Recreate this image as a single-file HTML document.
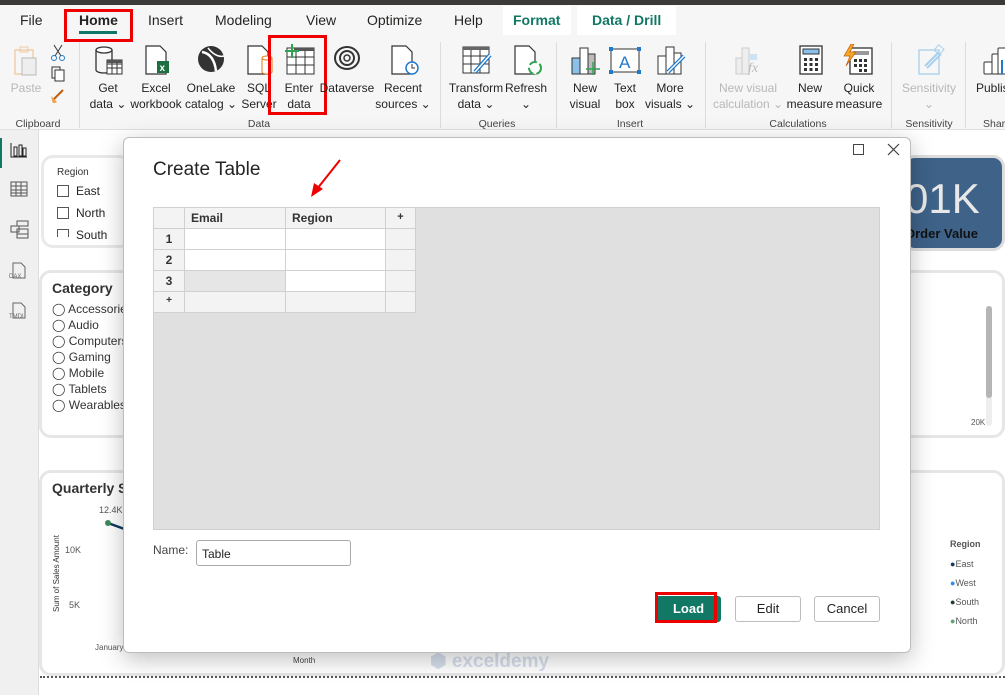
<!DOCTYPE html>
<html><head><meta charset="utf-8">
<style>
*{margin:0;padding:0;box-sizing:border-box}
body{width:1005px;height:695px;overflow:hidden;position:relative;background:#fff;font-family:"Liberation Sans",sans-serif;color:#252423}
.a{position:absolute}
.tab{position:absolute;top:12px;font-size:14px;color:#252423}
.btn{position:absolute;top:80px;width:80px;margin-left:-40px;text-align:center;font-size:12px;line-height:16px;color:#252423;white-space:nowrap}
.dis{color:#b8b8b8}
.ic{position:absolute;top:44px}
.sep{position:absolute;top:42px;width:1px;height:86px;background:#dcdcdc}
.gl{position:absolute;top:118px;font-size:10.5px;color:#444;width:100px;margin-left:-50px;text-align:center}
.card{position:absolute;background:#fff;border:3px solid #e6e6e6;border-radius:12px}
.cell{position:absolute;border-right:1px solid #d0d0d0;border-bottom:1px solid #d0d0d0;font-size:12px;font-weight:bold;color:#333}
.pbtn{position:absolute;top:596px;height:26px;border:1px solid #bdbdbd;border-radius:3px;background:#fff;font-size:13px;text-align:center;line-height:24px;color:#252423}
</style></head><body>
<div class="a" style="left:0;top:0;width:1005px;height:5px;background:#3b3a39"></div>
<div class="a" style="left:0;top:5px;width:1005px;height:125px;background:#f6f6f6"></div>
<div class="a" style="left:503px;top:6px;width:68px;height:29px;background:#fff"></div>
<div class="a" style="left:577px;top:6px;width:99px;height:29px;background:#fff"></div>
<div class="tab" style="left:20px">File</div>
<div class="tab" style="left:79px;font-weight:bold">Home</div>
<div class="a" style="left:79px;top:31px;width:38px;height:3px;background:#117865"></div>
<div class="a" style="left:64px;top:9px;width:69px;height:33px;border:3px solid #e00"></div>
<div class="tab" style="left:148px">Insert</div>
<div class="tab" style="left:215px">Modeling</div>
<div class="tab" style="left:306px">View</div>
<div class="tab" style="left:367px">Optimize</div>
<div class="tab" style="left:454px">Help</div>
<div class="tab" style="left:513px;color:#117865;font-weight:bold">Format</div>
<div class="tab" style="left:592px;color:#117865;font-weight:bold">Data / Drill</div>

<svg class="ic" style="left:12px" width="32" height="32"><rect x="3" y="6" width="18" height="24" fill="none" stroke="#f0c8a0" stroke-width="1.3"/><rect x="10" y="14" width="14" height="17" fill="#eee" stroke="#bbb"/><rect x="8" y="3" width="8" height="5" fill="none" stroke="#f0c8a0"/></svg>
<svg class="ic" style="left:50px;top:43px" width="16" height="60"><path d="M4 2 L11 13 M12 2 L5 13" stroke="#333" fill="none"/><circle cx="4" cy="15" r="2.5" stroke="#1f7acb" fill="none"/><circle cx="12" cy="15" r="2.5" stroke="#1f7acb" fill="none"/><rect x="2" y="24" width="8" height="11" fill="none" stroke="#333"/><rect x="5" y="27" width="9" height="11" fill="#fff" stroke="#333"/><path d="M3 57 L13 47" stroke="#c35b15" stroke-width="2"/><path d="M1 53 L7 59 L3 61 Z" fill="#f2a04a"/></svg>
<div class="btn dis" style="left:26px">Paste</div>
<div class="sep" style="left:79px"></div>

<svg class="ic" style="left:93px" width="32" height="34"><path d="M3 6 v20 a8 3 0 0 0 16 0 v-20" fill="none" stroke="#333" stroke-width="1.3"/><ellipse cx="11" cy="6" rx="8" ry="3" fill="#fff" stroke="#333" stroke-width="1.3"/><rect x="14" y="16" width="15" height="14" fill="#fff" stroke="#333"/><path d="M14 20h15M14 24h15M19 16v14M24 16v14" stroke="#333"/><rect x="14" y="16" width="15" height="3" fill="#555"/></svg>
<div class="btn" style="left:108px">Get<br>data ⌄</div>
<svg class="ic" style="left:144px" width="30" height="34"><path d="M2 2 h14 l6 6 v22 h-20 z" fill="#fff" stroke="#333" stroke-width="1.2"/><rect x="13" y="17" width="12" height="12" fill="#1d6f42"/><text x="15.5" y="27" font-size="10" fill="#fff" font-family="Liberation Sans" font-weight="bold">x</text></svg>
<div class="btn" style="left:156px">Excel<br>workbook</div>
<svg class="ic" style="left:196px" width="30" height="32"><circle cx="15" cy="15" r="13" fill="#333"/><path d="M6 8 Q18 10 20 27" stroke="#fff" stroke-width="2.5" fill="none"/><path d="M12 4 Q20 14 28 12" stroke="#fff" stroke-width="1.5" fill="none"/></svg>
<div class="btn" style="left:211px">OneLake<br>catalog ⌄</div>
<svg class="ic" style="left:246px" width="30" height="34"><path d="M2 2 h14 l6 6 v22 h-20 z" fill="#fff" stroke="#333" stroke-width="1.2"/><path d="M16 14 v14 a5 2 0 0 0 10 0 v-14" fill="#fff" stroke="#e07a10"/><ellipse cx="21" cy="14" rx="5" ry="2" fill="#fff" stroke="#e07a10"/></svg>
<div class="btn" style="left:259px">SQL<br>Server</div>
<svg class="ic" style="left:284px" width="32" height="32"><rect x="3" y="4" width="27" height="26" fill="#fff" stroke="#333"/><rect x="10" y="4" width="20" height="3" fill="#555"/><path d="M3 13h27M3 21h27M12 7v23M21 7v23" stroke="#333"/><path d="M8 0v14M1 7h14" stroke="#2da44e" stroke-width="2"/></svg>
<div class="btn" style="left:299px">Enter<br>data</div>
<div class="a" style="left:268px;top:35px;width:59px;height:80px;border:3px solid #e00"></div>
<svg class="ic" style="left:333px" width="30" height="30"><ellipse cx="14" cy="14" rx="12" ry="11" fill="none" stroke="#333" stroke-width="2"/><ellipse cx="14" cy="14" rx="7" ry="7" fill="none" stroke="#333" stroke-width="2"/><circle cx="14" cy="14" r="3" fill="none" stroke="#333" stroke-width="1.5"/></svg>
<div class="btn" style="left:347px">Dataverse</div>
<svg class="ic" style="left:390px" width="32" height="34"><path d="M2 2 h14 l6 6 v22 h-20 z" fill="#fff" stroke="#333" stroke-width="1.2"/><circle cx="22" cy="24" r="6" fill="#fff" stroke="#1f7acb" stroke-width="1.5"/><path d="M22 20v4h3" stroke="#333" fill="none"/></svg>
<div class="btn" style="left:403px">Recent<br>sources ⌄</div>
<div class="sep" style="left:440px"></div>

<svg class="ic" style="left:461px" width="32" height="32"><rect x="2" y="3" width="26" height="26" fill="#fff" stroke="#333"/><rect x="2" y="3" width="26" height="3" fill="#666"/><path d="M2 12h26M2 20h26M10 6v23M19 6v23" stroke="#333"/><path d="M14 28 L29 11" stroke="#1f7acb" stroke-width="4"/><path d="M14 28 L29 11" stroke="#fff" stroke-width="1.5"/></svg>
<div class="btn" style="left:476px">Transform<br>data ⌄</div>
<svg class="ic" style="left:513px" width="32" height="34"><path d="M2 2 h14 l6 6 v22 h-20 z" fill="#fff" stroke="#333" stroke-width="1.2"/><circle cx="22" cy="24" r="6" fill="#fff" stroke="#2da44e" stroke-width="2" stroke-dasharray="8 3"/></svg>
<div class="btn" style="left:526px">Refresh<br>⌄</div>
<div class="sep" style="left:556px"></div>

<svg class="ic" style="left:571px" width="32" height="32"><rect x="1" y="14" width="8" height="16" fill="#8ac0ea" stroke="#333"/><rect x="9" y="4" width="8" height="26" fill="#fff" stroke="#333"/><rect x="17" y="10" width="7" height="20" fill="#bbb" stroke="#333"/><path d="M22 18v13M15 25h14" stroke="#2da44e" stroke-width="1.5"/></svg>
<div class="btn" style="left:585px">New<br>visual</div>
<svg class="ic" style="left:609px" width="32" height="32"><rect x="2" y="5" width="28" height="23" fill="#fff" stroke="#333"/><rect x="0" y="3" width="4" height="4" fill="#1f7acb"/><rect x="28" y="3" width="4" height="4" fill="#1f7acb"/><rect x="0" y="26" width="4" height="4" fill="#1f7acb"/><rect x="28" y="26" width="4" height="4" fill="#1f7acb"/><text x="10" y="24" font-size="17" fill="#1f7acb" font-family="Liberation Sans">A</text></svg>
<div class="btn" style="left:625px">Text<br>box</div>
<svg class="ic" style="left:656px" width="32" height="32"><rect x="2" y="12" width="8" height="18" fill="#fff" stroke="#333"/><rect x="10" y="3" width="8" height="27" fill="#fff" stroke="#333"/><rect x="18" y="9" width="7" height="21" fill="#fff" stroke="#333"/><path d="M12 28 L28 12" stroke="#1f7acb" stroke-width="4"/><path d="M12 28 L28 12" stroke="#fff" stroke-width="1.5"/></svg>
<div class="btn" style="left:670px">More<br>visuals ⌄</div>
<div class="sep" style="left:705px"></div>

<svg class="ic" style="left:734px" width="32" height="32"><rect x="2" y="14" width="6" height="16" fill="#eee" stroke="#ccc"/><rect x="8" y="4" width="7" height="26" fill="#eee" stroke="#ccc"/><rect x="15" y="10" width="8" height="6" fill="#cde3f3"/><text x="14" y="28" font-size="14" font-style="italic" fill="#bbb" font-family="Liberation Serif">fx</text></svg>
<div class="btn dis" style="left:748px">New visual<br>calculation ⌄</div>
<svg class="ic" style="left:797px" width="30" height="32"><rect x="3" y="2" width="22" height="28" fill="#fff" stroke="#333" stroke-width="1.3"/><rect x="6" y="5" width="16" height="5" fill="#8ac0ea" stroke="#333"/><g fill="#333"><rect x="7" y="14" width="3" height="3"/><rect x="12.5" y="14" width="3" height="3"/><rect x="18" y="14" width="3" height="3"/><rect x="7" y="19" width="3" height="3"/><rect x="12.5" y="19" width="3" height="3"/><rect x="18" y="19" width="3" height="3"/><rect x="7" y="24" width="3" height="3"/><rect x="12.5" y="24" width="3" height="3"/><rect x="18" y="24" width="3" height="3"/></g></svg>
<div class="btn" style="left:810px">New<br>measure</div>
<svg class="ic" style="left:842px" width="34" height="32"><rect x="8" y="4" width="22" height="26" fill="#fff" stroke="#333" stroke-width="1.3"/><rect x="11" y="7" width="16" height="4" fill="#999"/><g fill="#333"><rect x="12" y="15" width="3" height="3"/><rect x="17" y="15" width="3" height="3"/><rect x="22" y="15" width="3" height="3"/><rect x="12" y="20" width="3" height="3"/><rect x="17" y="20" width="3" height="3"/><rect x="22" y="20" width="3" height="3"/><rect x="17" y="25" width="3" height="3"/><rect x="22" y="25" width="3" height="3"/></g><path d="M9 0 L2 12 L8 12 L4 22 L14 8 L8 8 L12 0Z" fill="#f5a623" stroke="#c35b15" stroke-width=".7"/></svg>
<div class="btn" style="left:859px">Quick<br>measure</div>
<div class="sep" style="left:891px"></div>
<svg class="ic" style="left:917px" width="30" height="32"><rect x="2" y="6" width="20" height="24" fill="none" stroke="#a8d0ee" stroke-width="1.3"/><path d="M8 22 L22 8 M10 24 L24 10" stroke="#a8d0ee" stroke-width="2"/><rect x="19" y="2" width="7" height="7" fill="none" stroke="#a8d0ee" transform="rotate(40 22 5)"/></svg>
<div class="btn dis" style="left:929px">Sensitivity<br>⌄</div>
<div class="sep" style="left:965px"></div>
<svg class="ic" style="left:983px" width="24" height="32"><rect x="1" y="18" width="8" height="12" rx="1" fill="#fff" stroke="#333"/><rect x="9" y="10" width="8" height="20" rx="1" fill="#fff" stroke="#333"/><rect x="15" y="4" width="8" height="26" rx="1" fill="#fff" stroke="#333"/><path d="M19 30 V16" stroke="#1f7acb" stroke-width="2"/></svg>
<div class="btn" style="left:1010px;text-align:left;margin-left:-34px">Publis</div>

<div class="gl" style="left:38px">Clipboard</div>
<div class="gl" style="left:259px">Data</div>
<div class="gl" style="left:497px">Queries</div>
<div class="gl" style="left:630px">Insert</div>
<div class="gl" style="left:798px">Calculations</div>
<div class="gl" style="left:929px">Sensitivity</div>
<div class="gl" style="left:1005px;text-align:left;margin-left:-22px">Share</div>
<div class="a" style="left:0;top:129px;width:1005px;height:1px;background:#e0e0e0"></div>

<div class="a" style="left:0;top:130px;width:39px;height:565px;background:#f0f0f0;border-right:1px solid #ddd"></div>
<div class="a" style="left:0;top:138px;width:2px;height:30px;background:#117865"></div>
<svg class="a" style="left:10px;top:142px" width="18" height="18"><path d="M1 1v14h16" stroke="#222" fill="none"/><rect x="4" y="5" width="3" height="9" fill="none" stroke="#222"/><rect x="9" y="3" width="3" height="11" fill="none" stroke="#222"/><rect x="13" y="6" width="3" height="8" fill="none" stroke="#222"/></svg>
<svg class="a" style="left:10px;top:181px" width="18" height="16"><rect x="1" y="1" width="16" height="14" fill="none" stroke="#555"/><path d="M1 5h16M1 9h16M1 12h16M6 1v14M11 1v14" stroke="#555"/></svg>
<svg class="a" style="left:10px;top:220px" width="19" height="19"><rect x="7" y="1" width="11" height="5" fill="none" stroke="#555"/><rect x="1" y="6" width="8" height="6" fill="none" stroke="#555"/><rect x="7" y="9" width="11" height="5" fill="none" stroke="#555"/><rect x="7" y="14" width="11" height="4" fill="none" stroke="#555"/></svg>
<svg class="a" style="left:8px;top:262px" width="22" height="20"><path d="M5 1h8l4 4v11h-12z" fill="none" stroke="#666"/><text x="1" y="16" font-size="6" fill="#666" font-family="Liberation Sans">DAX</text></svg>
<svg class="a" style="left:8px;top:302px" width="22" height="20"><path d="M5 1h8l4 4v11h-12z" fill="none" stroke="#666"/><text x="1" y="16" font-size="6" fill="#666" font-family="Liberation Sans">TMDL</text></svg>

<div class="card" style="left:41px;top:155px;width:90px;height:93px;border-color:#e9e9e9"></div>
<div class="a" style="left:57px;top:167px;font-size:10px;color:#333">Region</div>
<div class="a" style="left:57px;top:185px;width:12px;height:12px;border:1px solid #555"></div><div class="a" style="left:76px;top:184px;font-size:12px">East</div>
<div class="a" style="left:57px;top:207px;width:12px;height:12px;border:1px solid #555"></div><div class="a" style="left:76px;top:206px;font-size:12px">North</div>
<div class="a" style="left:57px;top:229px;width:12px;height:8px;border:1px solid #555;border-bottom:none"></div><div class="a" style="left:76px;top:228px;font-size:12px;height:12px;overflow:hidden">South</div>
<div class="card" style="left:39px;top:270px;width:100px;height:168px"></div>
<div class="a" style="left:52px;top:280px;font-size:14px;font-weight:bold;color:#333">Category</div>
<div class="a" style="left:52px;top:301px;font-size:12px;line-height:16px;color:#333">
<div>◯ Accessories</div><div>◯ Audio</div><div>◯ Computers</div><div>◯ Gaming</div><div>◯ Mobile</div><div>◯ Tablets</div><div>◯ Wearables</div></div>
<div class="card" style="left:39px;top:470px;width:966px;height:206px"></div>
<div class="a" style="left:52px;top:480px;font-size:14px;font-weight:bold;color:#333">Quarterly Sales</div>
<div class="a" style="left:99px;top:505px;font-size:9px;color:#555">12.4K</div>
<svg class="a" style="left:100px;top:515px" width="30" height="15"><path d="M8 8 L30 16" stroke="#12385e" stroke-width="2.5"/><circle cx="8" cy="8" r="3" fill="#3d8a5a"/></svg>
<div class="a" style="font-size:8px;color:#333;transform:rotate(-90deg);transform-origin:left top;top:612px;left:52px;white-space:nowrap">Sum of Sales Amount</div>
<div class="a" style="left:65px;top:545px;font-size:9px;color:#555">10K</div>
<div class="a" style="left:69px;top:600px;font-size:9px;color:#555">5K</div>
<div class="a" style="left:95px;top:643px;font-size:8px;color:#555">January</div>
<div class="a" style="left:293px;top:656px;font-size:8px;color:#444">Month</div>
<div class="a" style="left:950px;top:539px;font-size:9px;font-weight:bold;color:#555">Region</div>
<div class="a" style="left:950px;top:555px;font-size:9px;line-height:19px;color:#555">
<div><span style="color:#12385e">●</span>East</div><div><span style="color:#2f8af5">●</span>West</div><div><span style="color:#1d3d35">●</span>South</div><div><span style="color:#5aa870">●</span>North</div></div>
<div class="a" style="left:40px;top:676px;width:965px;height:0;border-top:2px dotted #555"></div>
<div class="card" style="left:903px;top:155px;width:102px;height:96px;background:#3e6288;border-color:#ddd"></div>
<div class="a" style="left:905px;top:175px;font-size:42px;color:#e8e8e8">01K</div>
<div class="a" style="left:905px;top:226px;font-size:13px;font-weight:bold;color:#111">Order Value</div>
<div class="card" style="left:900px;top:270px;width:105px;height:168px"></div>
<div class="a" style="left:986px;top:306px;width:6px;height:120px;background:#eee;border-radius:3px"></div>
<div class="a" style="left:986px;top:306px;width:6px;height:92px;background:#b5b5b5;border-radius:3px"></div>
<div class="a" style="left:971px;top:418px;font-size:8px;color:#555">20K</div>
<div class="a" style="left:430px;top:650px;font-size:19px;font-weight:bold;color:#d6deec">⬢ exceldemy</div>

<div class="a" style="left:123px;top:137px;width:788px;height:516px;background:#fff;border:1px solid #bdbdbd;border-radius:6px;box-shadow:0 6px 24px rgba(0,0,0,.25)"></div>
<div class="a" style="left:153px;top:159px;font-size:19px;color:#252423">Create Table</div>
<div class="a" style="left:853px;top:144px;width:11px;height:11px;border:1px solid #444"></div>
<svg class="a" style="left:887px;top:143px" width="13" height="13"><path d="M1 1L12 12M12 1L1 12" stroke="#444" stroke-width="1.2"/></svg>
<svg class="a" style="left:308px;top:158px" width="36" height="42"><path d="M32 2 L9 31" stroke="#e00" stroke-width="2"/><path d="M3 39 L6 25 L15 31Z" fill="#e00"/></svg>
<div class="a" style="left:153px;top:207px;width:727px;height:323px;background:#e0e0e0;border:1px solid #d0d0d0"></div>
<div class="a" style="left:153px;top:207px;width:263px;height:106px;background:#f3f3f3;border-left:1px solid #d0d0d0;border-top:1px solid #d0d0d0"></div>
<div class="cell" style="left:154px;top:208px;width:31px;height:21px"></div>
<div class="cell" style="left:185px;top:208px;width:101px;height:21px;padding:3px 0 0 6px">Email</div>
<div class="cell" style="left:286px;top:208px;width:100px;height:21px;padding:3px 0 0 6px">Region</div>
<div class="cell" style="left:386px;top:208px;width:30px;height:21px;text-align:center;padding-top:3px;font-size:11px">+</div>
<div class="cell" style="left:154px;top:229px;width:31px;height:21px;text-align:center;padding-top:3px">1</div>
<div class="cell" style="left:185px;top:229px;width:101px;height:21px;background:#fff"></div>
<div class="cell" style="left:286px;top:229px;width:100px;height:21px;background:#fff"></div>
<div class="cell" style="left:386px;top:229px;width:30px;height:21px"></div>
<div class="cell" style="left:154px;top:250px;width:31px;height:21px;text-align:center;padding-top:3px">2</div>
<div class="cell" style="left:185px;top:250px;width:101px;height:21px;background:#fff"></div>
<div class="cell" style="left:286px;top:250px;width:100px;height:21px;background:#fff"></div>
<div class="cell" style="left:386px;top:250px;width:30px;height:21px"></div>
<div class="cell" style="left:154px;top:271px;width:31px;height:21px;text-align:center;padding-top:3px">3</div>
<div class="cell" style="left:185px;top:271px;width:101px;height:21px;background:#e6e6e6"></div>
<div class="cell" style="left:286px;top:271px;width:100px;height:21px;background:#fff"></div>
<div class="cell" style="left:386px;top:271px;width:30px;height:21px"></div>
<div class="cell" style="left:154px;top:292px;width:31px;height:21px;text-align:center;padding-top:3px;font-size:10px">+</div>
<div class="cell" style="left:185px;top:292px;width:101px;height:21px"></div>
<div class="cell" style="left:286px;top:292px;width:100px;height:21px"></div>
<div class="cell" style="left:386px;top:292px;width:30px;height:21px"></div>
<div class="a" style="left:153px;top:543px;font-size:12px;color:#444">Name:</div>
<div class="a" style="left:196px;top:540px;width:155px;height:26px;border:1px solid #aaa;border-radius:3px;font-size:12px;padding:6px 0 0 5px">Table</div>
<div class="pbtn" style="left:656px;width:65px;background:#117865;border-color:#117865;color:#fff;font-weight:bold">Load</div>
<div class="a" style="left:655px;top:592px;width:62px;height:31px;border:3px solid #e00"></div>
<div class="pbtn" style="left:735px;width:66px">Edit</div>
<div class="pbtn" style="left:814px;width:66px">Cancel</div>
</body></html>
